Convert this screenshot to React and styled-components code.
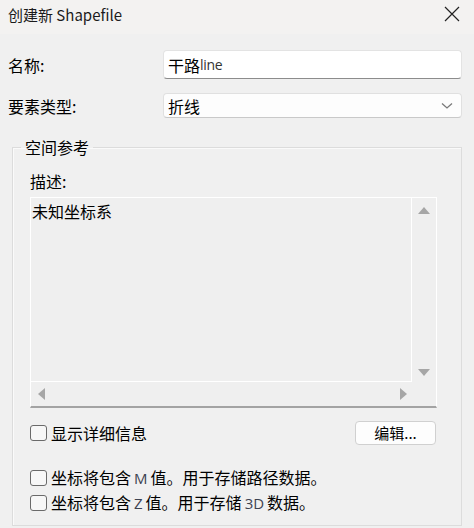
import React from "react";
import styled, { createGlobalStyle } from "styled-components";

const GlobalStyle = createGlobalStyle`
  html, body {
    margin: 0;
    padding: 0;
    background: #f0f0f0;
  }
  body {
    font-family: "Noto Sans CJK SC", "Noto Sans", sans-serif;
    color: #000;
  }
`;

const Dialog = styled.div`
  width: 474px;
  height: 528px;
  display: flex;
  flex-direction: column;
  background: #f0f0f0;
  overflow: hidden;
`;

const TitleBar = styled.div`
  height: 34px;
  flex: none;
  display: flex;
  align-items: center;
  justify-content: space-between;
  padding: 0 12px 6px 8px;
  background: #f3f2f1;
  font-size: 15px;
  color: #1b1b1b;
  line-height: 1;
  box-sizing: border-box;
`;

const CloseButton = styled.div`
  width: 20px;
  height: 20px;
  display: flex;
  align-items: center;
  justify-content: center;
`;

const Body = styled.div`
  flex: 1;
  display: flex;
  flex-direction: column;
  padding: 16px 12px 0 8px;
`;

const FormRow = styled.div`
  display: grid;
  grid-template-columns: 155px 1fr;
  align-items: center;
  margin-bottom: ${(p) => p.$gap || 0}px;
`;

const Label = styled.div`
  font-size: 16px;
  line-height: 20px;
`;

const TextField = styled.div`
  height: 29px;
  box-sizing: border-box;
  background: #fff;
  border: 1px solid #e3e3e3;
  border-bottom: 1px solid #8c8c8c;
  border-radius: 4px;
  display: flex;
  align-items: center;
  padding-left: 4px;
  font-size: 16px;
`;

const Latin = styled.span`
  font-family: "Open Sans", "Liberation Sans", sans-serif;
  font-size: 14px;
  color: #333;
  letter-spacing: -0.3px;
`;

const SelectBox = styled.div`
  height: 25px;
  box-sizing: border-box;
  background: #fdfdfd;
  border: 1px solid #e0e0e0;
  border-bottom-color: #c9c9c9;
  border-radius: 4px;
  display: flex;
  align-items: center;
  justify-content: space-between;
  padding: 0 8px 0 4px;
  font-size: 16px;
`;

const Group = styled.fieldset`
  margin: 19px 0 0 4px;
  padding: 14px 24px 10px 17px;
  border: 1px solid #dcdcdc;
  box-shadow: inset 1px 1px 0 #fafafa;
  min-width: 0;
  display: flex;
  flex-direction: column;
`;

const Legend = styled.legend`
  font-size: 16px;
  line-height: 20px;
  padding: 0 4px;
  margin-left: -9px;
`;

const Description = styled.div`
  font-size: 16px;
  line-height: 20px;
  margin-bottom: 6px;
`;

const ScrollBox = styled.div`
  height: 211px;
  box-sizing: border-box;
  display: grid;
  grid-template-columns: 1fr 24px;
  grid-template-rows: 1fr 24px;
  border: 1px solid #fff;
  border-bottom: 2px solid #a3a3a3;
  background: #efefef;
`;

const ScrollContent = styled.div`
  grid-column: 1;
  grid-row: 1;
  border-right: 1px solid #fff;
  border-bottom: 1px solid #fff;
  padding: 2px 1px;
  font-size: 16px;
  line-height: 22px;
`;

const VScroll = styled.div`
  grid-column: 2;
  grid-row: 1 / 3;
  display: flex;
  flex-direction: column;
  justify-content: space-between;
  align-items: center;
  padding: 9px 0 30px;
`;

const HScroll = styled.div`
  grid-column: 1;
  grid-row: 2;
  display: flex;
  justify-content: space-between;
  align-items: center;
  padding: 0 5px 0 7px;
`;

const Arrow = styled.div`
  width: 0;
  height: 0;
  border-style: solid;
  ${(p) =>
    p.$dir === "up"
      ? "border-width: 0 6px 7px 6px; border-color: transparent transparent #a6a6a6 transparent;"
      : p.$dir === "down"
      ? "border-width: 7px 6px 0 6px; border-color: #a6a6a6 transparent transparent transparent;"
      : p.$dir === "left"
      ? "border-width: 6px 7px 6px 0; border-color: transparent #a6a6a6 transparent transparent;"
      : "border-width: 6px 0 6px 7px; border-color: transparent transparent transparent #a6a6a6;"}
`;

const OptionRow = styled.div`
  display: flex;
  align-items: center;
  justify-content: space-between;
  margin-top: ${(p) => p.$top || 0}px;
`;

const CheckLabel = styled.label`
  display: flex;
  align-items: center;
  gap: 4px;
  font-size: 16px;
  line-height: 24px;
`;

const Box = styled.span`
  width: 17px;
  height: 16px;
  box-sizing: border-box;
  border: 1px solid #6a6a6a;
  border-radius: 3px;
  background: #f7f7f7;
  flex: none;
`;

const Mark = styled.span`
  font-family: "Open Sans", "Liberation Sans", sans-serif;
  font-size: 15px;
  color: #3d4250;
  margin: 0 3px;
`;

const EditButton = styled.button`
  width: 81px;
  height: 24px;
  margin-right: 1px;
  border: 1px solid #d0d0d0;
  border-radius: 4px;
  background: #fdfdfd;
  font-family: "Noto Sans CJK SC", sans-serif;
  font-size: 15px;
  color: #000;
  padding: 0;
  line-height: 22px;
`;

function Checkbox({ children }) {
  return (
    <CheckLabel>
      <Box />
      <span>{children}</span>
    </CheckLabel>
  );
}

export default function App() {
  return (
    <Dialog>
      <GlobalStyle />
      <TitleBar>
        <span>创建新 Shapefile</span>
        <CloseButton>
          <svg width="16" height="16" viewBox="0 0 16 16">
            <path d="M1 1 L15 15 M15 1 L1 15" stroke="#222" strokeWidth="1.2" fill="none" />
          </svg>
        </CloseButton>
      </TitleBar>
      <Body>
        <FormRow $gap={14}>
          <Label>名称:</Label>
          <TextField>
            干路<Latin>line</Latin>
          </TextField>
        </FormRow>
        <FormRow>
          <Label>要素类型:</Label>
          <SelectBox>
            <span>折线</span>
            <svg width="12" height="8" viewBox="0 0 12 8">
              <path d="M1 1.5 L6 6 L11 1.5" stroke="#7a7a7a" strokeWidth="1.3" fill="none" />
            </svg>
          </SelectBox>
        </FormRow>
        <Group>
          <Legend>空间参考</Legend>
          <Description>描述:</Description>
          <ScrollBox>
            <ScrollContent>未知坐标系</ScrollContent>
            <VScroll>
              <Arrow $dir="up" />
              <Arrow $dir="down" />
            </VScroll>
            <HScroll>
              <Arrow $dir="left" />
              <Arrow $dir="right" />
            </HScroll>
          </ScrollBox>
          <OptionRow $top={13}>
            <Checkbox>显示详细信息</Checkbox>
            <EditButton>编辑...</EditButton>
          </OptionRow>
          <OptionRow $top={20}>
            <Checkbox>
              坐标将包含<Mark>M</Mark>值。用于存储路径数据。
            </Checkbox>
          </OptionRow>
          <OptionRow>
            <Checkbox>
              坐标将包含<Mark>Z</Mark>值。用于存储<Mark>3D</Mark>数据。
            </Checkbox>
          </OptionRow>
        </Group>
      </Body>
    </Dialog>
  );
}
